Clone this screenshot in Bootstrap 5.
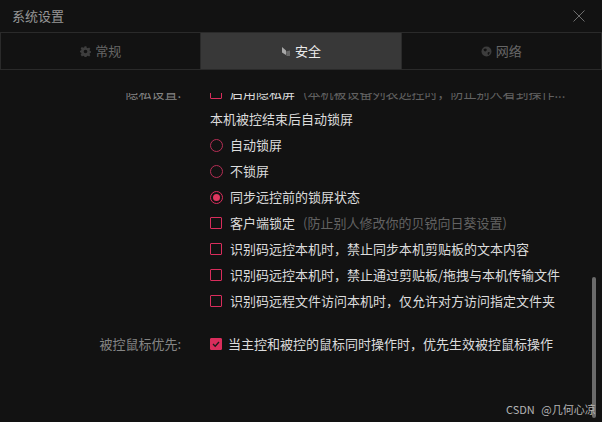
<!DOCTYPE html>
<html lang="zh">
<head>
<meta charset="utf-8">
<title>系统设置</title>
<link href="https://cdn.jsdelivr.net/npm/bootstrap@5.3.0/dist/css/bootstrap.min.css" rel="stylesheet">
<style>
html,body{height:100%;margin:0;background:#121212;overflow:hidden}
body{font-family:"Noto Sans CJK SC","Liberation Sans",sans-serif;font-size:13px;color:#dcdcdc;line-height:26px}
.shell{width:602px;height:422px;position:relative;overflow:hidden;background:#121212}
.head{height:32px;padding-left:12px;font-size:13px;color:#969696}
.tabsbar{height:38px;border:1px solid #2a2a2a}
.tabx{flex:1 1 0;color:#666;gap:4px;height:100%}
.tabx+.tabx{border-left:1px solid #2a2a2a}
.tabx.on{background:#383838;color:#ececec}
.scrollarea{height:329px;margin-top:23px;overflow:hidden}
.scrollinner{margin-top:-13px}
.labelcol{width:181px;text-align:right;color:#858585;flex:none}
.optcol{margin-left:29px;min-width:0}
.optrow{height:26px;gap:8px;white-space:nowrap}
.hint{color:#626262;margin-left:8px}
.box{width:12px;height:12px;border:1px solid #d92d5c;border-radius:1px;flex:none}
.box.checked{background:#d92d5c;margin-right:-2px}
.rad{width:13px;height:13px;border:1px solid #b52e55;border-radius:50%;flex:none;margin-right:-1px;position:relative}
.rad.on{border-color:#d92d5c}
.rad.on::after{content:"";position:absolute;inset:2px;background:#e0365f;border-radius:50%}
.gapblock{margin-top:17px}
.thumb{position:absolute;right:6px;top:277px;width:4px;height:141px;background:#6b6b6b;border-radius:2px}
.mark-w{position:absolute;left:506px;top:401px;font-size:11px;line-height:16px;color:#b4b4b4;white-space:nowrap;word-spacing:4px}
.closex{position:absolute;left:572px;top:9px;display:block}
</style>
</head>
<body>
<div class="shell">
  <div class="head d-flex align-items-center">系统设置</div>
  <svg class="closex" width="14" height="14" viewBox="0 0 14 14" fill="none" stroke="#6e6e6e" stroke-width="1"><path d="M1.500 1.500 12.500 12.500M12.500 1.500 1.500 12.500"/></svg>
  <div class="tabsbar d-flex">
    <div class="tabx d-flex align-items-center justify-content-center">
      <svg width="11" height="11" viewBox="0 0 12 12"><path fill="#3d3d3d" fill-rule="evenodd" d="M5 .3h2l.3 1.600 1.200.5 1.400-.9 1.400 1.400-.9 1.400.5 1.200 1.600.3v1.400l-1.600.3-.5 1.200.9 1.400-1.400 1.400-1.400-.9-1.200.5-.3 1.600H5l-.3-1.600-1.200-.5-1.400.9L.7 9.600l.9-1.400-.5-1.200L-.5 6.700V5.300l1.600-.3.5-1.200-.9-1.400L2.100 1l1.400.9 1.200-.5z M6 4a2 2 0 1 0 0 4 2 2 0 0 0 0-4z"/></svg>
      <span>常规</span>
    </div>
    <div class="tabx on d-flex align-items-center justify-content-center">
      <svg width="10" height="11" viewBox="0 0 10 11"><path fill="#a8a8a8" d="M1 1 5 4.500V9L1 6.500z"/><path fill="#6a6a6a" d="M9 4.500V10H5.500L5 5.500z"/></svg>
      <span>安全</span>
    </div>
    <div class="tabx d-flex align-items-center justify-content-center">
      <svg width="11" height="11" viewBox="0 0 11 11"><circle cx="5.500" cy="5.500" r="5" fill="#3d3d3d"/><path fill="#121212" d="M2.500 3 5 2.500 6 4 4.500 5.500 3 5zM7 6l2 .5-1.500 2.500L6.500 8z"/></svg>
      <span>网络</span>
    </div>
  </div>
  <div class="scrollarea">
    <div class="scrollinner">
      <div class="d-flex">
        <div class="labelcol">隐私设置:</div>
        <div class="optcol">
          <div class="optrow d-flex align-items-center"><span class="box"></span><span>启用隐私屏<span class="hint">(本机被设备列表远控时，防止别人看到操作...</span></span></div>
          <div class="optrow d-flex align-items-center">本机被控结束后自动锁屏</div>
          <div class="optrow d-flex align-items-center"><span class="rad"></span><span>自动锁屏</span></div>
          <div class="optrow d-flex align-items-center"><span class="rad"></span><span>不锁屏</span></div>
          <div class="optrow d-flex align-items-center"><span class="rad on"></span><span>同步远控前的锁屏状态</span></div>
          <div class="optrow d-flex align-items-center"><span class="box"></span><span>客户端锁定<span class="hint">(防止别人修改你的贝锐向日葵设置)</span></span></div>
          <div class="optrow d-flex align-items-center"><span class="box"></span><span>识别码远控本机时，禁止同步本机剪贴板的文本内容</span></div>
          <div class="optrow d-flex align-items-center"><span class="box"></span><span>识别码远控本机时，禁止通过剪贴板/拖拽与本机传输文件</span></div>
          <div class="optrow d-flex align-items-center"><span class="box"></span><span>识别码远程文件访问本机时，仅允许对方访问指定文件夹</span></div>
        </div>
      </div>
      <div class="d-flex gapblock">
        <div class="labelcol">被控鼠标优先:</div>
        <div class="optcol">
          <div class="optrow d-flex align-items-center"><span class="box checked"><svg class="d-block" width="10" height="10" viewBox="0 0 10 10" fill="none" stroke="#1a1a1a" stroke-width="1.300"><path d="M2 5 4.200 7.200 8 3"/></svg></span><span>当主控和被控的鼠标同时操作时，优先生效被控鼠标操作</span></div>
        </div>
      </div>
    </div>
  </div>
  <div class="thumb"></div>
  <div class="mark-w">CSDN @几何心凉</div>
</div>
</body>
</html>
